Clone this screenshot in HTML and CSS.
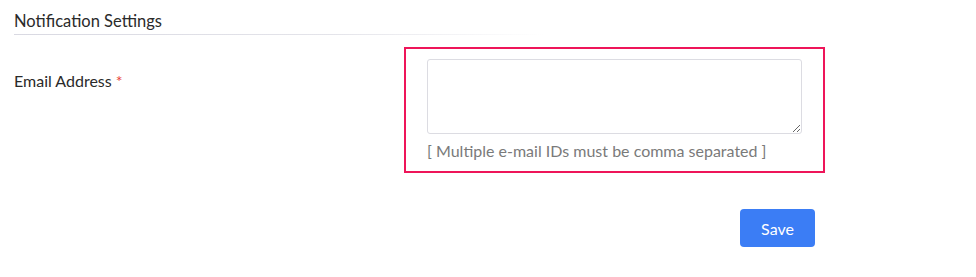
FILE: index.html
```html
<!DOCTYPE html>
<html lang="en">
<head>
  <meta charset="UTF-8">
  <meta name="viewport" content="width=device-width, initial-scale=1.0">
  <title>Notification Settings</title>
  <link rel="stylesheet" href="styles.css">
</head>
<body>
  <div class="page">
    <div class="section-title">Notification Settings</div>
    <div class="divider"></div>
    <div class="form-row">
      <label class="field-label" for="email">Email Address <span class="required">*</span></label>
      <div class="field-box">
        <textarea id="email" class="email-input"></textarea>
        <div class="hint">[ Multiple e-mail IDs must be comma separated ]</div>
      </div>
    </div>
    <div class="actions">
      <button class="btn-save">Save</button>
    </div>
  </div>
</body>
</html>
```

FILE: styles.css
```css
html, body {
  margin: 0;
  padding: 0;
  background-color: #fff;
  font-family: Lato, "Open Sans", sans-serif;
  color: #222;
}

.page {
  padding: 0 14px;
}

.section-title {
  font-size: 16.5px;
  line-height: 20px;
  padding-top: 11px;
  padding-bottom: 3px;
  color: #2a2a2a;
}

.divider {
  height: 1px;
  width: 530px;
  background: linear-gradient(to right, #d9d9e2 0%, #e4e4ea 60%, #fff 100%);
}

.form-row {
  display: flex;
  margin-top: 12px;
}

.field-label {
  width: 390px;
  font-size: 16px;
  line-height: 20px;
  padding-top: 24px;
  color: #2a2a2a;
}

.required {
  color: #e8423a;
}

.field-box {
  width: 376px;
  border: 2px solid #ee1559;
  padding: 10px 20px 10px 21px;
}

.email-input {
  display: block;
  box-sizing: border-box;
  width: 375px;
  height: 75px;
  margin: 0;
  border: 1px solid #dcdce2;
  border-radius: 3px;
  resize: vertical;
  font-family: inherit;
}

.hint {
  margin-top: 7px;
  font-size: 16px;
  line-height: 20px;
  color: #7a7a7a;
}

.actions {
  padding-top: 36px;
  padding-left: 726px;
}

.btn-save {
  width: 75px;
  height: 38px;
  border: none;
  border-radius: 4px;
  background-color: #3b7df5;
  color: #fff;
  font-family: inherit;
  font-size: 16px;
  cursor: pointer;
}
```
